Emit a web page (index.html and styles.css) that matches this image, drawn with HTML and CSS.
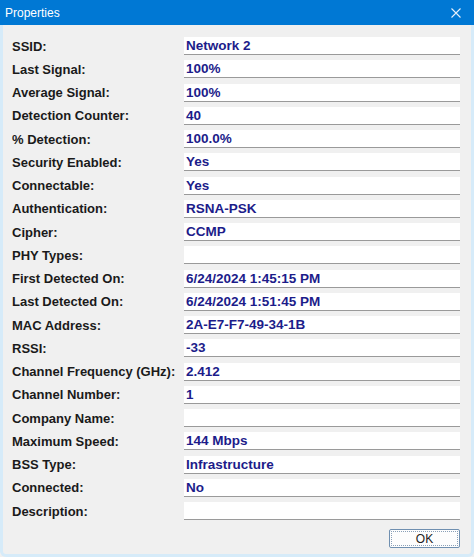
FILE: index.html
```html
<!DOCTYPE html>
<html lang="en">
<head>
    <meta charset="UTF-8">
    <title>Properties</title>
    <link rel="stylesheet" href="styles.css">
</head>
<body>
    <div class="window">
        <div class="titlebar">
            <span class="title">Properties</span>
            <svg class="close" width="10" height="10" viewBox="0 0 10 10">
                <path d="M0.5 0.5 L9.5 9.5 M9.5 0.5 L0.5 9.5" stroke="#e6f0fa" stroke-width="1.1" fill="none"/>
            </svg>
        </div>
        <div class="content">
            <div class="props">
                <div class="label">SSID:</div><div class="field">Network 2</div>
                <div class="label">Last Signal:</div><div class="field">100%</div>
                <div class="label">Average Signal:</div><div class="field">100%</div>
                <div class="label">Detection Counter:</div><div class="field">40</div>
                <div class="label">% Detection:</div><div class="field">100.0%</div>
                <div class="label">Security Enabled:</div><div class="field">Yes</div>
                <div class="label">Connectable:</div><div class="field">Yes</div>
                <div class="label">Authentication:</div><div class="field">RSNA-PSK</div>
                <div class="label">Cipher:</div><div class="field">CCMP</div>
                <div class="label">PHY Types:</div><div class="field"></div>
                <div class="label">First Detected On:</div><div class="field">6/24/2024 1:45:15 PM</div>
                <div class="label">Last Detected On:</div><div class="field">6/24/2024 1:51:45 PM</div>
                <div class="label">MAC Address:</div><div class="field">2A-E7-F7-49-34-1B</div>
                <div class="label">RSSI:</div><div class="field">-33</div>
                <div class="label">Channel Frequency (GHz):</div><div class="field">2.412</div>
                <div class="label">Channel Number:</div><div class="field">1</div>
                <div class="label">Company Name:</div><div class="field"></div>
                <div class="label">Maximum Speed:</div><div class="field">144 Mbps</div>
                <div class="label">BSS Type:</div><div class="field">Infrastructure</div>
                <div class="label">Connected:</div><div class="field">No</div>
                <div class="label">Description:</div><div class="field"></div>
            </div>
            <div class="buttons">
                <button class="ok">OK</button>
            </div>
        </div>
    </div>
</body>
</html>
```
FILE: styles.css
```css
* {
    box-sizing: border-box;
    margin: 0;
    padding: 0;
}

body {
    width: 474px;
    height: 557px;
    overflow: hidden;
    background: #f0f0f0;
    font-family: "Liberation Sans", Arial, sans-serif;
}

.window {
    height: 557px;
    display: flex;
    flex-direction: column;
    border: 3px solid #d6ebf9;
    border-top: none;
    border-radius: 0 0 6px 6px;
    background: #f0f0f0;
}

.titlebar {
    height: 25px;
    margin: 0 -3px;
    background: #0078d4;
    color: #fff;
    display: flex;
    align-items: center;
    justify-content: space-between;
    padding: 0 13px 0 5px;
}

.title {
    font-family: "Liberation Sans", Arial, sans-serif;
    font-size: 12px;
}

.close {
    display: block;
}

.content {
    flex: 1;
    padding: 12px 11px 0 9px;
}

.props {
    display: grid;
    grid-template-columns: 172px 276px;
    grid-auto-rows: 18px;
    row-gap: 5.25px;
    align-items: center;
}

.label {
    font-size: 13px;
    font-weight: bold;
    color: #1a1a1a;
}

.field {
    height: 18px;
    background: #fff;
    border-bottom: 1px solid #9a9a9a;
    padding-left: 2px;
    font-size: 13.5px;
    font-weight: bold;
    color: #1c1c8a;
    line-height: 17px;
}

.buttons {
    display: flex;
    justify-content: flex-end;
    margin-top: 9px;
}

.ok {
    width: 71px;
    height: 19px;
    background: #fdfdfd;
    border: 1px solid #6f8fb0;
    border-radius: 2px;
    outline: 1px dotted #8aa0b8;
    outline-offset: -3px;
    font-family: "Liberation Sans", Arial, sans-serif;
    font-size: 12px;
    color: #222;
}
```
